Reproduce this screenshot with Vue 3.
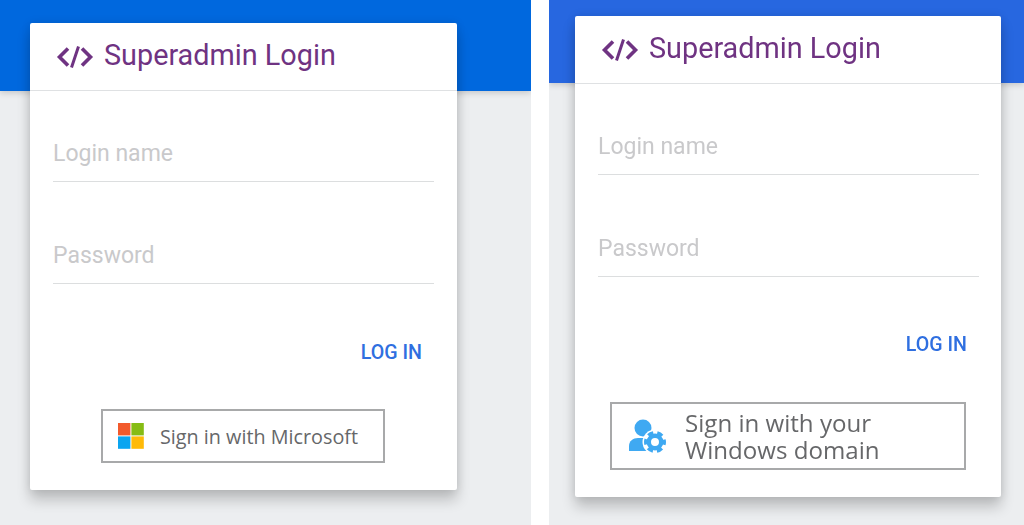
<script setup>
const panels = [
  { key: 'a', cls: 'panel-ms' },
  { key: 'b', cls: 'panel-win' }
]
</script>

<template>
  <div class="page">
    <section v-for="p in panels" :key="p.key" class="panel" :class="p.cls">
      <div class="band"></div>
      <div class="card">
        <header class="card-head">
          <svg class="code" viewBox="0 0 38 24" width="38" height="24" fill="none" stroke="currentColor" stroke-width="3.600">
            <path d="M12 3.500 3.500 12 12 20.500" />
            <path d="M26 3.500 34.500 12 26 20.500" />
            <path d="M22.500 1.500 15.500 22.500" stroke-width="3" />
          </svg>
          <h1>Superadmin Login</h1>
        </header>
        <div class="form">
          <div class="field">Login name</div>
          <div class="field">Password</div>
          <div class="actions"><span class="login">LOG IN</span></div>
          <div v-if="p.key === 'a'" class="sso sso-ms">
            <svg viewBox="0 0 26 26" width="26" height="26">
              <rect x="0" y="0" width="12.400" height="12.400" fill="#f25a2c" />
              <rect x="13.400" y="0" width="12.400" height="12.400" fill="#86bc14" />
              <rect x="0" y="13.400" width="12.400" height="12.400" fill="#0ba5f0" />
              <rect x="13.400" y="13.400" width="12.400" height="12.400" fill="#ffba08" />
            </svg>
            <span>Sign in with Microsoft</span>
          </div>
          <div v-else class="sso sso-win">
            <svg viewBox="0 0 38 34" width="38" height="34">
              <circle cx="14" cy="9" r="8.500" fill="#3fa9f2" />
              <path d="M0 32v-5c0-5 4-8 9-8h10c4 0 7 3 7 8v5z" fill="#3fa9f2" />
              <circle cx="26" cy="23" r="12.500" fill="#fff" />
              <circle cx="26" cy="23" r="6.200" fill="none" stroke="#3fa9f2" stroke-width="4.400" />
              <circle cx="26" cy="23" r="9.200" fill="none" stroke="#3fa9f2" stroke-width="3.600" stroke-dasharray="5.600 4.030" stroke-dashoffset="2.800" />
            </svg>
            <span>Sign in with your<br />Windows domain</span>
          </div>
        </div>
      </div>
    </section>
  </div>
</template>

<style>
html, body { margin: 0; background: #fff; overflow: hidden; }
</style>

<style scoped>
.page {
  width: 1024px;
  height: 525px;
  display: flex;
  gap: 18px;
  overflow: hidden;
  font-family: Roboto, "Liberation Sans", sans-serif;
  filter: blur(0.4px);
}
.panel {
  position: relative;
  background: #eceef0;
  overflow: hidden;
  height: 525px;
  box-sizing: border-box;
}
.panel-ms { width: 531px; padding: 23px 0 0 30px; }
.panel-win { width: 475px; padding: 16px 0 0 26px; }
.band {
  position: absolute;
  left: 0;
  right: 0;
  top: 0;
  box-shadow: 0 2px 6px rgba(0, 0, 0, 0.16);
}
.panel-ms .band { height: 91px; background: #0068de; }
.panel-win .band { height: 83px; background: #2767e0; }
.card {
  position: relative;
  background: #fff;
  border-radius: 2px;
  box-shadow: 0 10px 14px rgba(0, 0, 0, 0.2), 0 0 10px rgba(0, 0, 0, 0.1);
  box-sizing: border-box;
}
.panel-ms .card { width: 427px; height: 467px; }
.panel-win .card { width: 426px; height: 481px; }
.card-head {
  height: 67px;
  display: flex;
  align-items: center;
  gap: 10px;
  padding-left: 26px;
  border-bottom: 1px solid #dfe1e3;
  color: #6f3382;
}
.code { flex: none; }
h1 {
  margin: 0 0 2px;
  font-size: 28.800px;
  font-weight: 400;
  line-height: 1;
}
.form {
  padding: 0 23px;
  display: flex;
  flex-direction: column;
}
.panel-win .form { padding-right: 22px; }
.field {
  display: flex;
  align-items: flex-end;
  padding-bottom: 14px;
  box-sizing: border-box;
  height: 102px;
  border-bottom: 1px solid #dcdedf;
  color: #c9c9cb;
  font-size: 23px;
  line-height: 27px;
}
.field:first-child { height: 91px; }
.actions {
  display: flex;
  justify-content: flex-end;
  padding: 57px 12px 0 0;
  height: 22px;
}
.panel-ms .actions { padding-top: 58px; }
.login {
  color: #2f6fe0;
  font-size: 19.600px;
  font-weight: 500;
  line-height: 22px;
}
.sso {
  box-sizing: border-box;
  border: 2px solid #a8a9aa;
  display: flex;
  align-items: center;
  color: #666769;
  font-family: "Open Sans", "Noto Sans", sans-serif;
}
.sso-ms {
  align-self: flex-start;
  width: 284px;
  height: 54px;
  margin: 45px 0 0 48px;
  padding-left: 15px;
  gap: 16px;
  font-size: 19.800px;
}
.sso-win {
  align-self: flex-start;
  width: 356px;
  height: 68px;
  margin: 46px 0 0 12px;
  padding-left: 17px;
  gap: 18px;
  font-size: 24.100px;
  line-height: 27px;
}
</style>
